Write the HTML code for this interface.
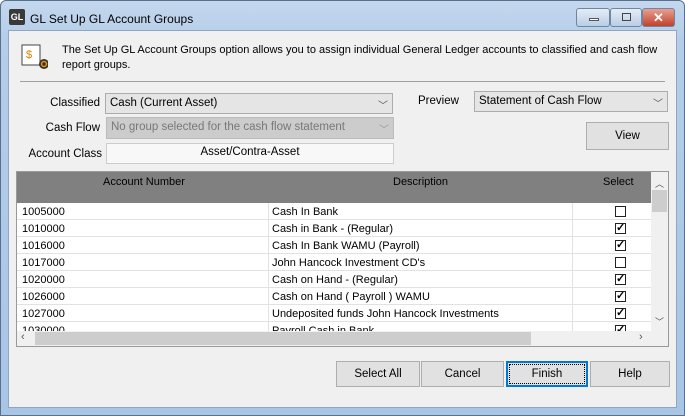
<!DOCTYPE html>
<html><head><style>
*{box-sizing:border-box;margin:0;padding:0}
body{width:685px;height:416px;overflow:hidden;font-family:"Liberation Sans",sans-serif;font-size:11px;color:#000;background:#fff;position:relative}
.win{position:absolute;left:0;top:0;width:685px;height:416px;background:linear-gradient(#c4d8ee,#b4cde8 40px,#a9c5e6);border:1px solid #58708c;border-radius:6px 6px 0 0}
.client{position:absolute;left:8px;top:30px;width:669px;height:378px;background:#f0f0f0;border:1px solid #8ea6c2}
.a{position:absolute}
.lbl{position:absolute;font-size:11.5px;text-align:right;width:90px}
.combo{position:absolute;background:#e5e5e5;border:1px solid #acacac;padding:3px 4px;font-size:11.5px;white-space:nowrap}
.combo .ar{position:absolute;right:4px;top:3px;color:#555;font-size:10px}
.btn{position:absolute;background:#e1e1e1;border:1px solid #adadad;text-align:center;font-size:11.5px}
.tb{position:absolute;top:8px;height:19px;border:1px solid #6f85a0;border-radius:3px}
.row{position:absolute;left:17px;width:634px;height:17px;border-bottom:1px solid #e2e2e2;background:#fff;font-size:11px}
.row span{position:absolute;top:3px}
.cb{position:absolute;left:598px;top:3px;width:11px;height:11px;border:1px solid #222;background:#fff;font-size:11px;line-height:9px;text-align:center;font-weight:bold}
</style></head><body>
<div class="win"></div>
<div class="a" style="left:9px;top:9px;width:16px;height:16px;background:#3a3a3a;color:#fff;font-size:9px;font-weight:bold;line-height:16px;text-align:center;border-radius:2px">GL</div>
<div class="a" style="left:30px;top:12px;font-size:12px">GL Set Up GL Account Groups</div>
<div class="tb" style="left:576px;width:34px;background:linear-gradient(#e4edf7,#b9cde5)"><div class="a" style="left:12px;top:9px;width:10px;height:3px;background:#fff;border:1px solid #555"></div></div>
<div class="tb" style="left:610px;width:32px;background:linear-gradient(#e4edf7,#b9cde5)"><div class="a" style="left:11px;top:4px;width:9px;height:8px;border:1px solid #444"></div></div>
<div class="tb" style="left:642px;width:33px;background:linear-gradient(#e8a090,#c0412c);color:#fff;text-align:center;font-weight:bold;font-size:13px;line-height:17px">✕</div>
<div class="client"></div>
<div class="a" style="left:20px;top:41px;width:28px;height:28px">
<svg width="28" height="28"><rect x="2" y="4" width="18" height="20" fill="#fff" stroke="#444"/><text x="6" y="17" font-size="11" fill="#e08000" font-family="Liberation Sans">$</text><circle cx="24" cy="23" r="5" fill="#333"/><circle cx="24" cy="23" r="2.5" fill="none" stroke="#f09000" stroke-width="1.5"/></svg></div>
<div class="a" style="left:62px;top:43px;width:600px;font-size:11px;line-height:15px">The Set Up GL Account Groups option allows you to assign individual General Ledger accounts to classified and cash flow report groups.</div>
<div class="a" style="left:20px;top:81px;width:645px;height:1px;background:#a0a0a0"></div>
<div class="lbl" style="left:10px;top:97px">Classified</div>
<div class="combo" style="left:105px;top:93px;width:288px;height:21px">Cash (Current Asset)<span class="ar">﹀</span></div>
<div class="lbl" style="left:10px;top:122px">Cash Flow</div>
<div class="combo" style="left:106px;top:117px;width:288px;height:22px;background:#ccc;border-color:#bbb;color:#777">No group selected for the cash flow statement<span class="ar" style="color:#999">﹀</span></div>
<div class="lbl" style="left:10px;top:148px;width:92px">Account Class</div>
<div class="a" style="left:106px;top:143px;width:288px;height:21px;background:#f8f8f8;border:1px solid #ccc;text-align:center;font-size:11.5px;padding-top:2px">Asset/Contra-Asset</div>
<div class="a" style="left:418px;top:95px;font-size:11.5px">Preview</div>
<div class="combo" style="left:474px;top:91px;width:194px;height:21px">Statement of Cash Flow<span class="ar">﹀</span></div>
<div class="btn" style="left:586px;top:122px;width:83px;height:28px;line-height:26px">View</div>
<div class="a" style="left:16px;top:171px;width:653px;height:176px;border:1px solid #999;background:#f0f0f0"></div>
<div class="a" style="left:17px;top:172px;width:634px;height:31px;background:#808080;font-size:11px">
<span class="a" style="left:86px;top:4px">Account Number</span><span class="a" style="left:376px;top:4px">Description</span><span class="a" style="left:586px;top:4px">Select</span></div>
<div class="a" style="left:651px;top:172px;width:17px;height:159px;background:#f0f0f0"><div class="a" style="left:4px;top:5px;font-size:9px;color:#555">︿</div><div class="a" style="left:1px;top:18px;width:15px;height:22px;background:#cdcdcd"></div><div class="a" style="left:4px;top:143px;font-size:9px;color:#555">﹀</div></div>
<div class="a" style="left:17px;top:203px;width:634px;height:128px;overflow:hidden">
<div style="position:relative;top:-203px;left:-17px">
<div class="row" style="top:203px"><span style="left:5px">1005000</span><span style="left:255px">Cash In Bank</span><div class="cb"></div></div>
<div class="row" style="top:220px"><span style="left:5px">1010000</span><span style="left:255px">Cash in Bank - (Regular)</span><div class="cb">✓</div></div>
<div class="row" style="top:237px"><span style="left:5px">1016000</span><span style="left:255px">Cash In Bank WAMU (Payroll)</span><div class="cb">✓</div></div>
<div class="row" style="top:254px"><span style="left:5px">1017000</span><span style="left:255px">John Hancock Investment CD's</span><div class="cb"></div></div>
<div class="row" style="top:271px"><span style="left:5px">1020000</span><span style="left:255px">Cash on Hand - (Regular)</span><div class="cb">✓</div></div>
<div class="row" style="top:288px"><span style="left:5px">1026000</span><span style="left:255px">Cash on Hand ( Payroll ) WAMU</span><div class="cb">✓</div></div>
<div class="row" style="top:305px"><span style="left:5px">1027000</span><span style="left:255px">Undeposited funds John Hancock Investments</span><div class="cb">✓</div></div>
<div class="row" style="top:322px"><span style="left:5px">1030000</span><span style="left:255px">Payroll Cash in Bank</span><div class="cb">✓</div></div>
<div class="a" style="left:268px;top:203px;width:1px;height:140px;background:#e2e2e2"></div>
<div class="a" style="left:572px;top:203px;width:1px;height:140px;background:#e2e2e2"></div>
</div></div>
<div class="a" style="left:17px;top:331px;width:651px;height:15px;background:#f0f0f0"><div class="a" style="left:18px;top:1px;width:496px;height:13px;background:#cdcdcd"></div><div class="a" style="left:4px;top:0;font-size:11px;color:#555">‹</div><div class="a" style="left:622px;top:0;font-size:11px;color:#555">›</div></div>
<div class="btn" style="left:336px;top:361px;width:84px;height:26px;line-height:24px">Select All</div>
<div class="btn" style="left:421px;top:361px;width:83px;height:26px;line-height:24px">Cancel</div>
<div class="btn" style="left:506px;top:361px;width:82px;height:26px;line-height:22px;border:2px solid #0078d7;outline:1px dotted #000;outline-offset:-4px">Finish</div>
<div class="btn" style="left:590px;top:361px;width:80px;height:26px;line-height:24px">Help</div>
</body></html>
